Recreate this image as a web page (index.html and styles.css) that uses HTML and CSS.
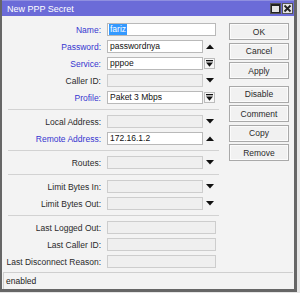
FILE: index.html
```html
<!DOCTYPE html>
<html>
<head>
<meta charset="utf-8">
<link rel="stylesheet" href="styles.css">
</head>
<body>
<div class="window">
  <div class="titlebar">
    <span class="title">New PPP Secret</span>
    <div class="tbtns">
      <span class="tbtn"><svg width="9" height="9" viewBox="0 0 9 9"><rect x="0.5" y="0.5" width="8" height="8" fill="none" stroke="#222" stroke-width="1"/><rect x="0.5" y="0.5" width="8" height="1.5" fill="#222"/></svg></span>
      <span class="tbtn"><svg width="9" height="9" viewBox="0 0 9 9"><path d="M1.5 1.5 L7.5 7.5 M7.5 1.5 L1.5 7.5" stroke="#222" stroke-width="1.8"/></svg></span>
    </div>
  </div>
  <div class="main">
    <div class="form">
      <div class="row"><span class="lbl blue">Name:</span><div class="inp wide"><span class="sel">fariz</span></div></div>
      <div class="row"><span class="lbl blue">Password:</span><div class="inp">passwordnya</div><span class="ico"><svg width="8" height="5" viewBox="0 0 8 5"><path d="M0 5 L4 0.5 L8 5 Z" fill="#111"/></svg></span></div>
      <div class="row"><span class="lbl blue">Service:</span><div class="inp">pppoe</div><span class="ico dd"><svg width="7" height="7" viewBox="0 0 7 7"><rect x="0" y="0" width="7" height="1.3" fill="#111"/><path d="M0 2.5 L7 2.5 L3.5 6.8 Z" fill="#111"/></svg></span></div>
      <div class="row"><span class="lbl">Caller ID:</span><div class="inp off"></div><span class="ico"><svg width="8" height="5" viewBox="0 0 8 5"><path d="M0 0 L8 0 L4 4.5 Z" fill="#111"/></svg></span></div>
      <div class="row"><span class="lbl blue">Profile:</span><div class="inp">Paket 3 Mbps</div><span class="ico dd"><svg width="7" height="7" viewBox="0 0 7 7"><rect x="0" y="0" width="7" height="1.3" fill="#111"/><path d="M0 2.5 L7 2.5 L3.5 6.8 Z" fill="#111"/></svg></span></div>
      <div class="sep"></div>
      <div class="row"><span class="lbl">Local Address:</span><div class="inp off"></div><span class="ico"><svg width="8" height="5" viewBox="0 0 8 5"><path d="M0 0 L8 0 L4 4.5 Z" fill="#111"/></svg></span></div>
      <div class="row"><span class="lbl blue">Remote Address:</span><div class="inp">172.16.1.2</div><span class="ico"><svg width="8" height="5" viewBox="0 0 8 5"><path d="M0 5 L4 0.5 L8 5 Z" fill="#111"/></svg></span></div>
      <div class="sep"></div>
      <div class="row"><span class="lbl">Routes:</span><div class="inp off"></div><span class="ico"><svg width="8" height="5" viewBox="0 0 8 5"><path d="M0 0 L8 0 L4 4.5 Z" fill="#111"/></svg></span></div>
      <div class="sep"></div>
      <div class="row"><span class="lbl">Limit Bytes In:</span><div class="inp off"></div><span class="ico"><svg width="8" height="5" viewBox="0 0 8 5"><path d="M0 0 L8 0 L4 4.5 Z" fill="#111"/></svg></span></div>
      <div class="row"><span class="lbl">Limit Bytes Out:</span><div class="inp off"></div><span class="ico"><svg width="8" height="5" viewBox="0 0 8 5"><path d="M0 0 L8 0 L4 4.5 Z" fill="#111"/></svg></span></div>
      <div class="sep"></div>
      <div class="row"><span class="lbl">Last Logged Out:</span><div class="inp wide off"></div></div>
      <div class="row"><span class="lbl">Last Caller ID:</span><div class="inp wide off"></div></div>
      <div class="row"><span class="lbl">Last Disconnect Reason:</span><div class="inp wide off"></div></div>
    </div>
    <div class="buttons">
      <div class="btn">OK</div>
      <div class="btn">Cancel</div>
      <div class="btn">Apply</div>
      <div class="btn gap">Disable</div>
      <div class="btn">Comment</div>
      <div class="btn">Copy</div>
      <div class="btn">Remove</div>
    </div>
  </div>
  <div class="status">enabled</div>
</div>
</body>
</html>
```

FILE: styles.css
```css
* { box-sizing: border-box; }
html, body { margin: 0; padding: 0; }
body {
  width: 300px;
  height: 293px;
  background: #e6e6e6;
  font-family: "Liberation Sans", Arial, sans-serif;
  font-size: 8.5px;
  color: #222;
}
.window {
  width: 297px;
  height: 292px;
  background: #f3f3f3;
  border-left: 2px solid #666;
  border-right: 3px solid #666;
  border-bottom: 3px solid #666;
  display: flex;
  flex-direction: column;
}
.titlebar {
  height: 16px;
  background: #6b6bd8;
  display: flex;
  align-items: center;
  justify-content: space-between;
  padding: 0 1px 0 5px;
  border-top: 1px solid #8f8fe0;
}
.title {
  color: #fff;
  font-size: 9px;
}
.tbtns {
  display: flex;
  gap: 1px;
}
.tbtn {
  width: 11px;
  height: 11px;
  background: #e4e4e4;
  border: 1px solid #555;
  display: flex;
  align-items: center;
  justify-content: center;
}
.main {
  display: flex;
  flex: 1;
}
.form {
  width: 227px;
  padding-top: 5px;
  display: flex;
  flex-direction: column;
}
.row {
  height: 17px;
  display: flex;
  align-items: center;
}
.lbl {
  width: 99px;
  text-align: right;
  margin-right: 6px;
  white-space: nowrap;
  color: #2a2a2a;
}
.lbl.blue { color: #3535d0; }
.inp {
  width: 96px;
  height: 13px;
  background: #fff;
  border: 1px solid #b9b9b9;
  padding: 0 2px;
  line-height: 11px;
  font-size: 8.5px;
  color: #111;
  white-space: nowrap;
  overflow: hidden;
}
.inp.wide { width: 109px; }
.inp.off {
  background: #efefef;
  border-color: #cdcdcd;
}
.sel {
  display: inline-block;
  background: #3399ff;
  color: #fff;
  padding: 0 1px;
  margin-left: -1px;
  line-height: 11px;
}
.ico {
  width: 11px;
  height: 11px;
  margin-left: 1px;
  display: flex;
  align-items: center;
  justify-content: center;
}
.ico.dd {
  background: #f7f7f7;
  border: 1px solid #bcbcbc;
}
.sep {
  height: 1px;
  margin: 3px 10px 3px 6px;
  background: #d2d2d2;
}
.buttons {
  width: 60px;
  padding-top: 7px;
  display: flex;
  flex-direction: column;
  gap: 2.5px;
}
.btn {
  height: 17px;
  background: #f1f1f1;
  border: 1px solid #a9a9a9;
  box-shadow: inset 0 0 0 1px #fbfbfb;
  display: flex;
  align-items: center;
  justify-content: center;
  color: #2a2a2a;
}
.btn.gap { margin-top: 4px; }
.status {
  height: 17px;
  margin: 0 1px 0 1px;
  border-top: 1px solid #cfcfcf;
  border-left: 1px solid #cfcfcf;
  display: flex;
  align-items: center;
  padding-left: 2px;
  color: #222;
}
```
